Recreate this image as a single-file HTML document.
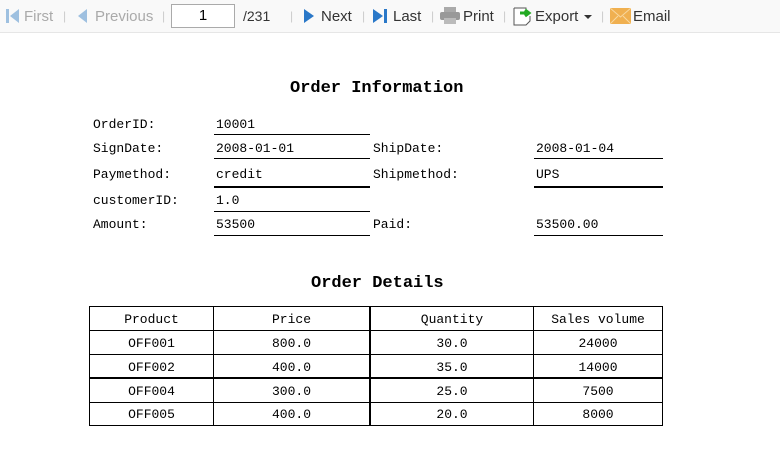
<!DOCTYPE html>
<html><head><meta charset="utf-8"><style>
body{margin:0;width:780px;height:469px;background:#fff;position:relative;overflow:hidden;font-family:"Liberation Mono","WenQuanYi Zen Hei",monospace;font-size:13px;color:#000}
.tb{position:absolute;left:0;top:0;width:780px;height:32px;background:#f9f9f9;border-bottom:1px solid #e6e6e6;font-family:"Liberation Sans",sans-serif;font-size:15px;color:#333}
.tb span{position:absolute;top:8px;white-space:nowrap}
.g{color:#aaa}
.sep{color:#ccc;font-size:12px;top:9px!important}
.t{position:absolute;white-space:nowrap;margin-top:1px}
.l{position:absolute;height:1px;background:#000}
.v{position:absolute;width:1px;background:#000}
.c{position:absolute;text-align:center;white-space:nowrap;margin-top:1px}
</style></head><body>
<div class="tb">
<svg style="position:absolute;left:6px;top:9px" width="14" height="14"><rect x="0" y="0" width="3" height="14" fill="#9ec0e0"/><polygon points="13,0 4,7 13,14" fill="#9ec0e0"/></svg>
<span class="g" style="left:24px">First</span><span class="sep" style="left:63px">|</span>
<svg style="position:absolute;left:77px;top:9px" width="12" height="14"><polygon points="10,0 1,7 10,14" fill="#9ec0e0"/></svg>
<span class="g" style="left:95px">Previous</span><span class="sep" style="left:162px">|</span>
<div style="position:absolute;left:171px;top:4px;width:62px;height:22px;border:1px solid #aaa;background:#fff;text-align:center;line-height:22px;font-size:15px;color:#000">1</div>
<span style="left:243px;font-size:14px">/231</span><span class="sep" style="left:290px">|</span>
<svg style="position:absolute;left:303px;top:9px" width="12" height="14"><polygon points="1,0 11,7 1,14" fill="#2a78c8"/></svg>
<span style="left:321px">Next</span><span class="sep" style="left:362px">|</span>
<svg style="position:absolute;left:373px;top:9px" width="14" height="14"><polygon points="0,0 10,7 0,14" fill="#2a78c8"/><rect x="11" y="0" width="3" height="14" fill="#2a78c8"/></svg>
<span style="left:393px">Last</span><span class="sep" style="left:431px">|</span>
<svg style="position:absolute;left:440px;top:7px" width="20" height="18"><rect x="4" y="0" width="12" height="5" fill="#aaa"/><rect x="0" y="5" width="20" height="8" rx="2" fill="#999"/><rect x="4" y="11" width="12" height="6" fill="#bbb"/></svg>
<span style="left:463px">Print</span><span class="sep" style="left:503px">|</span>
<svg style="position:absolute;left:513px;top:6px" width="20" height="20"><path d="M1 2h12v5M1 2v17h12l4-4V10" fill="#fff" stroke="#555"/><path d="M7 7h8M12 4l4 3-4 3" stroke="#2a2" stroke-width="3" fill="none"/></svg>
<span style="left:535px">Export</span>
<svg style="position:absolute;left:584px;top:15px" width="8" height="5"><polygon points="0,0 8,0 4,4" fill="#333"/></svg>
<span class="sep" style="left:601px">|</span>
<svg style="position:absolute;left:610px;top:8px" width="21" height="16"><rect width="21" height="16" fill="#f0b050"/><path d="M0 0l10.5 9L21 0M0 16l8-8M21 16l-8-8" stroke="#f8d8a0" fill="none"/></svg>
<span style="left:633px">Email</span>
</div>

<div class="t" style="left:290px;top:78px;font-size:17px;font-weight:bold">Order Information</div>

<div class="t" style="left:93px;top:116px">OrderID:</div><div class="t" style="left:216px;top:116px">10001</div>
<div class="l" style="left:214px;top:134px;width:156px"></div>
<div class="t" style="left:93px;top:140px">SignDate:</div><div class="t" style="left:216px;top:140px">2008-01-01</div>
<div class="t" style="left:373px;top:140px">ShipDate:</div><div class="t" style="left:536px;top:140px">2008-01-04</div>
<div class="l" style="left:214px;top:158px;width:156px"></div><div class="l" style="left:534px;top:158px;width:129px"></div>
<div class="t" style="left:93px;top:166px">Paymethod:</div><div class="t" style="left:216px;top:166px">credit</div>
<div class="t" style="left:373px;top:166px">Shipmethod:</div><div class="t" style="left:536px;top:166px">UPS</div>
<div class="l" style="left:214px;top:186px;width:156px;height:2px"></div><div class="l" style="left:534px;top:186px;width:129px;height:2px"></div>
<div class="t" style="left:93px;top:192px">customerID:</div><div class="t" style="left:216px;top:192px">1.0</div>
<div class="l" style="left:214px;top:211px;width:156px"></div>
<div class="t" style="left:93px;top:216px">Amount:</div><div class="t" style="left:216px;top:216px">53500</div>
<div class="t" style="left:373px;top:216px">Paid:</div><div class="t" style="left:536px;top:216px">53500.00</div>
<div class="l" style="left:214px;top:235px;width:156px"></div><div class="l" style="left:534px;top:235px;width:129px"></div>

<div class="t" style="left:311px;top:273px;font-size:17px;font-weight:bold">Order Details</div>

<div class="l" style="left:89px;top:306px;width:574px"></div>
<div class="l" style="left:89px;top:330px;width:574px"></div>
<div class="l" style="left:89px;top:354px;width:574px"></div>
<div class="l" style="left:89px;top:377px;width:574px;height:2px"></div>
<div class="l" style="left:89px;top:402px;width:574px"></div>
<div class="l" style="left:89px;top:425px;width:574px"></div>
<div class="v" style="left:89px;top:306px;height:120px"></div>
<div class="v" style="left:213px;top:306px;height:120px"></div>
<div class="v" style="left:369px;top:306px;height:120px;width:2px"></div>
<div class="v" style="left:533px;top:306px;height:120px"></div>
<div class="v" style="left:662px;top:306px;height:120px"></div>

<div class="c" style="left:90px;width:123px;top:311px">Product</div>
<div class="c" style="left:214px;width:155px;top:311px">Price</div>
<div class="c" style="left:371px;width:162px;top:311px">Quantity</div>
<div class="c" style="left:534px;width:128px;top:311px">Sales volume</div>

<div class="c" style="left:90px;width:123px;top:335px">OFF001</div><div class="c" style="left:214px;width:155px;top:335px">800.0</div><div class="c" style="left:371px;width:162px;top:335px">30.0</div><div class="c" style="left:534px;width:128px;top:335px">24000</div>
<div class="c" style="left:90px;width:123px;top:359px">OFF002</div><div class="c" style="left:214px;width:155px;top:359px">400.0</div><div class="c" style="left:371px;width:162px;top:359px">35.0</div><div class="c" style="left:534px;width:128px;top:359px">14000</div>
<div class="c" style="left:90px;width:123px;top:383px">OFF004</div><div class="c" style="left:214px;width:155px;top:383px">300.0</div><div class="c" style="left:371px;width:162px;top:383px">25.0</div><div class="c" style="left:534px;width:128px;top:383px">7500</div>
<div class="c" style="left:90px;width:123px;top:406px">OFF005</div><div class="c" style="left:214px;width:155px;top:406px">400.0</div><div class="c" style="left:371px;width:162px;top:406px">20.0</div><div class="c" style="left:534px;width:128px;top:406px">8000</div>
</body></html>
